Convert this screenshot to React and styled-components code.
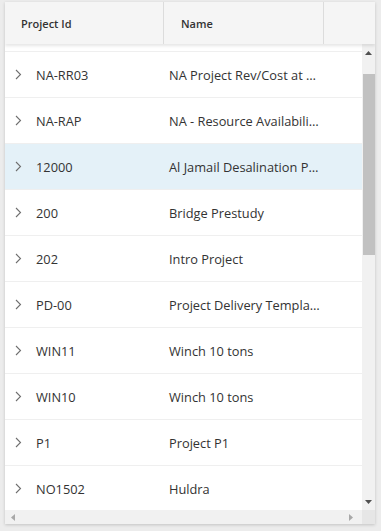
import React from "react";
import styled, { createGlobalStyle } from "styled-components";

const GlobalStyle = createGlobalStyle`
  html, body {
    margin: 0;
    padding: 0;
    background: #ececec;
    font-family: "Open Sans", "Noto Sans", sans-serif;
  }
`;

const Page = styled.div`
  width: 381px;
  height: 531px;
  padding: 2px 6px 7px 5px;
  box-sizing: border-box;
`;

const Grid = styled.div`
  height: 100%;
  background: #fff;
  display: flex;
  flex-direction: column;
  box-shadow: 0 1px 3px rgba(0, 0, 0, 0.18);
  overflow: hidden;
`;

const HeaderRow = styled.div`
  display: grid;
  grid-template-columns: 159px 160px 1fr;
  height: 42px;
  flex-shrink: 0;
  background: #f5f5f5;
  box-shadow: 0 2px 3px rgba(0, 0, 0, 0.1);
  position: relative;
  z-index: 1;
`;

const HeaderCell = styled.div`
  display: flex;
  align-items: center;
  padding-left: ${(p) => p.$pad}px;
  font-size: 11px;
  font-weight: 600;
  color: #333;
  border-right: ${(p) => (p.$last ? "none" : "1px solid #dcdcdc")};
`;

const Body = styled.div`
  flex: 1;
  display: flex;
  min-height: 0;
`;

const Rows = styled.div`
  flex: 1;
  overflow: hidden;
  padding-top: 6px;
  border-top: 1px solid #fff;
`;

const Row = styled.div`
  display: grid;
  grid-template-columns: 159px 160px 1fr;
  height: 45px;
  align-items: center;
  border-top: 1px solid #efefef;
  background: ${(p) => (p.$selected ? "#e4f1f8" : "#fff")};
  font-size: 12.8px;
  color: #333;
`;

const IdCell = styled.div`
  display: flex;
  align-items: center;
  padding-left: 10px;
`;

const Chevron = styled.span`
  display: inline-flex;
  width: 21px;
  color: #777;
`;

const NameCell = styled.div`
  padding: 0 4px 0 5px;
  white-space: nowrap;
  overflow: hidden;
`;

const VScroll = styled.div`
  width: 13px;
  flex-shrink: 0;
  background: #f1f1f1;
  display: flex;
  flex-direction: column;
  align-items: center;
`;

const Thumb = styled.div`
  width: 12px;
  background: #c1c1c1;
  height: ${(p) => p.$h}px;
  margin-top: ${(p) => p.$top}px;
`;

const ArrowBox = styled.div`
  height: 17px;
  width: 13px;
  display: flex;
  align-items: center;
  justify-content: center;
  margin-top: ${(p) => (p.$push ? "auto" : "0")};
`;

const HScroll = styled.div`
  height: 14px;
  flex-shrink: 0;
  display: flex;
  background: #f1f1f1;
`;

const HTrack = styled.div`
  flex: 1;
  display: flex;
  align-items: center;
  justify-content: space-between;
  padding: 0 9px 0 6px;
`;

const Corner = styled.div`
  width: 13px;
  background: #e6e6e6;
`;

const Tri = ({ dir, color = "#505050" }) => {
  const pts = {
    up: "0,4 3.5,0 7,4",
    down: "0,0 3.5,4 7,0",
    left: "4,0 0,3.5 4,7",
    right: "0,0 4,3.5 0,7",
  }[dir];
  const vert = dir === "up" || dir === "down";
  return (
    <svg width={vert ? 7 : 4} height={vert ? 4 : 7} viewBox={vert ? "0 0 7 4" : "0 0 4 7"}>
      <polygon points={pts} fill={color} />
    </svg>
  );
};

const ChevronIcon = () => (
  <svg width="7" height="11" viewBox="0 0 7 11">
    <polyline points="1,1 5.5,5.5 1,10" fill="none" stroke="#6f6f6f" strokeWidth="1.1" />
  </svg>
);

// names as the grid shows them, already cut by the column width
const projects = [
  { id: "NA-RR03", name: "NA Project Rev/Cost at …" },
  { id: "NA-RAP", name: "NA - Resource Availabili…" },
  { id: "12000", name: "Al Jamail Desalination P…", selected: true },
  { id: "200", name: "Bridge Prestudy" },
  { id: "202", name: "Intro Project" },
  { id: "PD-00", name: "Project Delivery Templa…" },
  { id: "WIN11", name: "Winch 10 tons" },
  { id: "WIN10", name: "Winch 10 tons" },
  { id: "P1", name: "Project P1" },
  { id: "NO1502", name: "Huldra" },
];

const App = () => (
  <>
    <GlobalStyle />
    <Page>
      <Grid>
        <HeaderRow>
          <HeaderCell $pad={16}>Project Id</HeaderCell>
          <HeaderCell $pad={17}>Name</HeaderCell>
          <HeaderCell $last />
        </HeaderRow>
        <Body>
          <Rows>
            {projects.map((p) => (
              <Row key={p.id} $selected={p.selected}>
                <IdCell>
                  <Chevron>
                    <ChevronIcon />
                  </Chevron>
                  {p.id}
                </IdCell>
                <NameCell>{p.name}</NameCell>
              </Row>
            ))}
          </Rows>
          <VScroll>
            <ArrowBox>
              <Tri dir="up" />
            </ArrowBox>
            <Thumb $h={181} $top={13} />
            <ArrowBox $push>
              <Tri dir="down" />
            </ArrowBox>
          </VScroll>
        </Body>
        <HScroll>
          <HTrack>
            <Tri dir="left" color="#a8a8a8" />
            <Tri dir="right" color="#a8a8a8" />
          </HTrack>
          <Corner />
        </HScroll>
      </Grid>
    </Page>
  </>
);

export default App;
